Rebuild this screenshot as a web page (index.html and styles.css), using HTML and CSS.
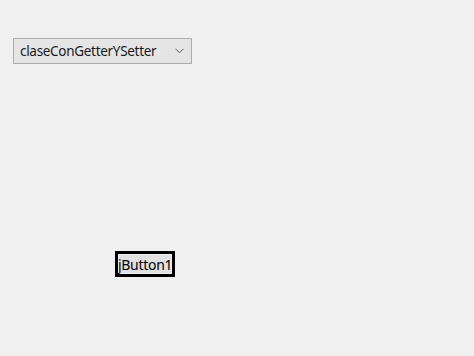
FILE: index.html
```html
<!DOCTYPE html>
<html lang="es">
<head>
    <meta charset="UTF-8">
    <title>Frame</title>
    <link rel="stylesheet" href="styles.css">
</head>
<body>
    <div class="combo">
        <span class="combo-text">claseConGetterYSetter</span>
        <svg class="combo-arrow" width="9" height="6" viewBox="0 0 9 6">
            <path d="M0.5 0.8 L4.5 4.8 L8.5 0.8" fill="none" stroke="#555" stroke-width="1"/>
        </svg>
    </div>
    <div class="btn-row">
        <button class="jbutton">jButton1</button>
    </div>
</body>
</html>
```

FILE: styles.css
```css
html, body {
    margin: 0;
    padding: 0;
}
body {
    width: 474px;
    height: 356px;
    background: #f0f0f0;
    font-family: "Noto Sans", "Open Sans", Arial, sans-serif;
    overflow: hidden;
}
.combo {
    display: flex;
    align-items: center;
    justify-content: space-between;
    box-sizing: border-box;
    width: 179px;
    height: 26px;
    margin: 38px 0 0 13px;
    padding: 0 6px 0 6px;
    background: #e5e5e5;
    border: 1px solid #adadad;
}
.combo-text {
    font-size: 13.5px;
    color: #1a1a1a;
    letter-spacing: -0.3px;
}
.combo-arrow {
    margin-right: 1px;
}
.btn-row {
    margin: 187px 0 0 115px;
}
.jbutton {
    box-sizing: border-box;
    width: 60px;
    height: 26px;
    padding: 0;
    border: 3px solid #000;
    background: #e1e1e1;
    box-shadow: inset 0 0 0 1px #f0f0f0;
    font-family: "Noto Sans", "Open Sans", Arial, sans-serif;
    font-size: 14px;
    color: #000;
    letter-spacing: -0.3px;
    white-space: nowrap;
    overflow: hidden;
}
```
